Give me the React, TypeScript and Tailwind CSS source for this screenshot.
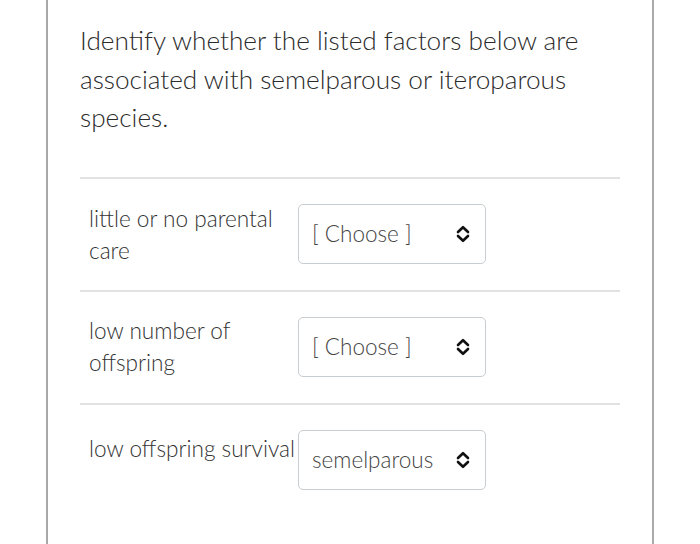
import React from 'react';

// Chevron up/down icon shown at right of each select
function UpDown() {
  return (
    <svg width="14" height="18" viewBox="0 0 14 18" fill="none" className="shrink-0">
      <path d="M2 7 L7 2.2 L12 7" stroke="#111" strokeWidth="2.6" strokeLinecap="round" strokeLinejoin="round" />
      <path d="M2 11 L7 15.8 L12 11" stroke="#111" strokeWidth="2.6" strokeLinecap="round" strokeLinejoin="round" />
    </svg>
  );
}

type Row = {
  lines: string[];
  value: string;
  textTop: string;
};

const rows: Row[] = [
  { lines: ['little or no parental', 'care'], value: '[ Choose ]', textTop: 'mt-[24px]' },
  { lines: ['low number of', 'offspring'], value: '[ Choose ]', textTop: 'mt-[23px]' },
  { lines: ['low offspring survival'], value: 'semelparous', textTop: 'mt-[28px]' },
];

export default function App() {
  return (
    <div className="w-[700px] h-[544px] bg-white overflow-hidden font-['Lato',sans-serif] font-light">
      <div className="ml-[46px] w-[608px] h-full border-x-2 border-[#a9a9a9] px-8">
        {/* enunciado */}
        <p className="pt-[21px] mb-[40px] text-[26.2px] leading-[38.5px] text-[#2b2b2b]">
          Identify whether the listed factors below are associated with semelparous or iteroparous species.
        </p>

        {rows.map((row, i) => (
          <div key={i} className="h-[113px] border-t-2 border-[#e2e2e2] flex pl-[9px]">
            <div className={`w-[209px] shrink-0 text-[22.6px] leading-[32px] text-[#333] whitespace-nowrap ${row.textTop}`}>
              {row.lines.map((l, j) => (
                <div key={j}>{l}</div>
              ))}
            </div>
            <div className="mt-[25px] w-[188px] h-[60px] border border-[#c8cdd1] rounded-[5px] flex items-center justify-between pl-[13px] pr-[15px] bg-white">
              <span className="text-[22.5px] text-[#444] leading-none pt-[2px]">{row.value}</span>
              <UpDown />
            </div>
          </div>
        ))}
      </div>
    </div>
  );
}
